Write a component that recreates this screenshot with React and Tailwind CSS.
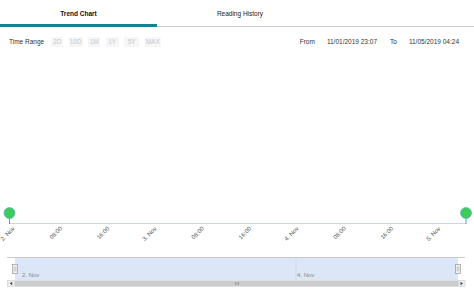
const ticks = ["2. Nov", "08:00", "16:00", "3. Nov", "08:00", "16:00", "4. Nov", "08:00", "16:00", "5. Nov"];

const ranges = [
  { label: "2D", w: "w-[12px]" },
  { label: "10D", w: "w-[14px]" },
  { label: "1M", w: "w-[12px]" },
  { label: "1Y", w: "w-[13px]" },
  { label: "5Y", w: "w-[15px]" },
  { label: "MAX", w: "w-[16px]" },
];

function Flag({ x }) {
  return (
    <g>
      <line x1={x} y1={217} x2={x} y2={224} stroke="#4aa3d6" strokeWidth="1" />
      <circle cx={x} cy={213} r="5.5" fill="#3ecb5b" stroke="#5aaed2" strokeWidth="0.7" />
    </g>
  );
}

function Handle({ x }) {
  return (
    <g>
      <rect x={x - 2.5} y={264.5} width="5" height="9" fill="#f2f2f2" stroke="#999" strokeWidth="0.7" />
      <line x1={x - 0.8} y1={266.5} x2={x - 0.8} y2={271.5} stroke="#999" strokeWidth="0.5" />
      <line x1={x + 0.8} y1={266.5} x2={x + 0.8} y2={271.5} stroke="#999" strokeWidth="0.5" />
    </g>
  );
}

function Chart() {
  return (
    <svg width="474" height="259" className="block" style={{ fontFamily: "'Liberation Sans', Arial, sans-serif" }}>
      <g transform="translate(0,-47)">
        {/* x axis */}
        <line x1="9" y1="223.5" x2="466" y2="223.5" stroke="#ccd6eb" strokeWidth="1" />
        {ticks.map((t, i) => {
          const x = 14.2 + 47.3 * i;
          return (
            <text
              key={i}
              x={x + 1}
              y={229}
              fontSize="6"
              fill="#555"
              textAnchor="end"
              transform={`rotate(-45 ${x + 1} 229)`}
            >
              {t}
            </text>
          );
        })}
        <Flag x={9.5} />
        <Flag x={466} />

        {/* navigator */}
        <rect x="15" y="258" width="443" height="22" fill="#dbe7f6" />
        <line x1="296" y1="258" x2="296" y2="280" stroke="#c8d4e4" strokeWidth="0.7" />
        <line x1="7" y1="257.5" x2="465" y2="257.5" stroke="#cccccc" strokeWidth="1" />
        <text x="22" y="277" fontSize="6" fill="#888">2. Nov</text>
        <text x="297" y="277" fontSize="6" fill="#888">4. Nov</text>
        <Handle x={15} />
        <Handle x={458} />

        {/* scrollbar */}
        <rect x="7" y="280" width="458" height="7" fill="#f2f2f2" />
        <rect x="15" y="280.5" width="443" height="6" fill="#c9cbcd" />
        <line x1="235.5" y1="282" x2="235.5" y2="285" stroke="#777" strokeWidth="0.5" />
        <line x1="237" y1="282" x2="237" y2="285" stroke="#777" strokeWidth="0.5" />
        <line x1="238.5" y1="282" x2="238.5" y2="285" stroke="#777" strokeWidth="0.5" />
        <rect x="7.5" y="280.5" width="7" height="6" fill="#ebebeb" stroke="#cccccc" strokeWidth="0.5" />
        <path d="M12.2 281.8 L9.8 283.5 L12.2 285.2 Z" fill="#444" />
        <rect x="458.5" y="280.5" width="6.5" height="6" fill="#ebebeb" stroke="#cccccc" strokeWidth="0.5" />
        <path d="M460.5 281.8 L462.9 283.5 L460.5 285.2 Z" fill="#444" />
      </g>
    </svg>
  );
}

export default function App() {
  return (
    <div className="w-[474px] h-[306px] bg-white overflow-hidden text-[6.5px] text-[#333] font-['Liberation_Sans',Arial,sans-serif]">
      <div className="flex h-[27px] border-b border-[#cfcfcf]">
        <div className="w-[157px] h-[27px] -mb-px border-b-[3px] border-[#1c7d96] pt-[9px] flex justify-center font-bold text-[#111]">
          Trend Chart
        </div>
        <div className="w-[166px] pt-[9px] flex justify-center text-[#222]">Reading History</div>
      </div>

      <div className="flex items-center h-[10px] mt-[10px] pl-[9px] pr-[15px]">
        <span>Time Range</span>
        <div className="flex gap-[5.5px] ml-[7px]">
          {ranges.map((r) => (
            <span key={r.label} className={`${r.w} h-[10px] flex items-center justify-center bg-[#f6f6f6] text-[#c8c8c8]`}>
              {r.label}
            </span>
          ))}
        </div>
        <div className="ml-auto flex items-center">
          <span className="mr-[12px]">From</span>
          <span className="mr-[13px]">11/01/2019 23:07</span>
          <span className="mr-[12px]">To</span>
          <span>11/05/2019 04:24</span>
        </div>
      </div>

      <Chart />
    </div>
  );
}
